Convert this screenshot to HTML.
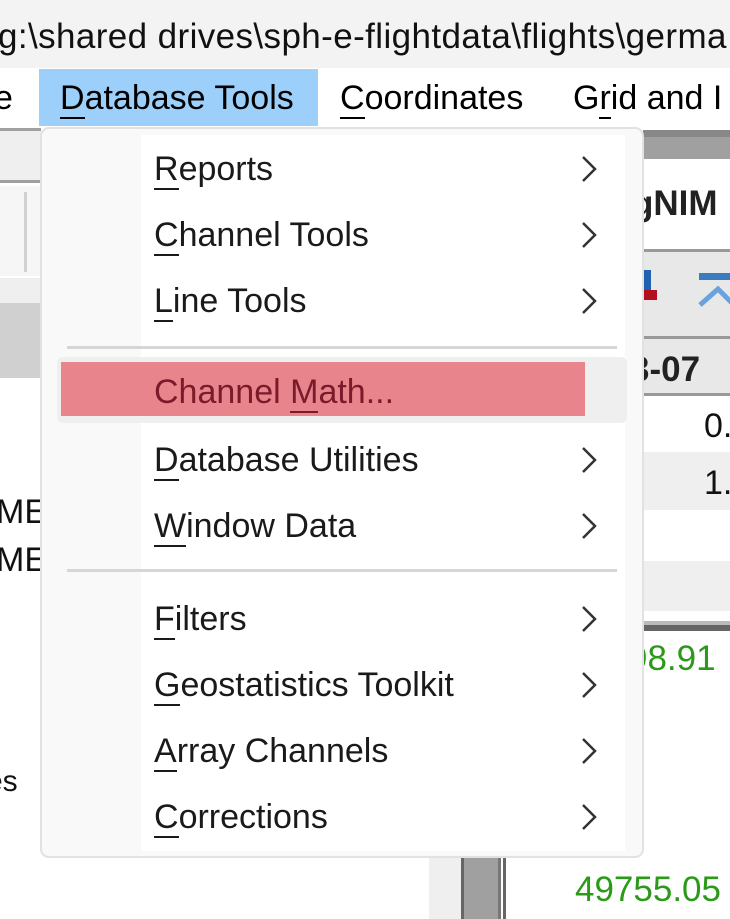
<!DOCTYPE html>
<html><head><meta charset="utf-8"><style>
*{margin:0;padding:0;box-sizing:border-box}
body{width:730px;height:919px;overflow:hidden;background:#fff;position:relative;font-family:"Liberation Sans",sans-serif;color:#000}
.a{position:absolute}
.t{position:absolute;white-space:nowrap;font-size:34px}
u{text-decoration:none;border-bottom:2px solid currentColor;line-height:1;}
.item{position:absolute;left:154px;font-size:34px;white-space:nowrap;color:#1a1a1a}
.sep{position:absolute;left:67px;width:550px;height:3px;background:#d6d6d6}
</style></head><body>
<div class="a" style="left:0;top:0;width:730px;height:68px;background:#f3f3f3"></div>
<div class="t" style="left:-2px;top:17px;font-size:35px;letter-spacing:0.4px;color:#111">g:\shared drives\sph-e-flightdata\flights\germa</div>
<div class="a" style="left:0;top:68px;width:730px;height:58px;background:#fff"></div>
<div class="a" style="left:39px;top:69px;width:279px;height:57px;background:#9ccffa"></div>
<div class="t" style="left:-6px;top:79px">e</div>
<div class="t" style="left:60px;top:79px"><u>D</u>atabase Tools</div>
<div class="t" style="left:340px;top:79px"><u>C</u>oordinates</div>
<div class="t" style="left:573px;top:79px">G<u>r</u>id and I</div>

<!-- left background -->
<div class="a" style="left:0;top:128px;width:41px;height:3px;background:#a0a0a0"></div>
<div class="a" style="left:0;top:131px;width:41px;height:50px;background:#efefef"></div>
<div class="a" style="left:0;top:180px;width:41px;height:3px;background:#a0a0a0"></div>
<div class="a" style="left:0;top:186px;width:41px;height:90px;background:#f6f6f6"></div>
<div class="a" style="left:24px;top:192px;width:3px;height:80px;background:#d0d0d0"></div>
<div class="a" style="left:0;top:278px;width:41px;height:26px;background:#efefef"></div>
<div class="a" style="left:0;top:303px;width:41px;height:75px;background:#d0d0d0"></div>
<div class="t" style="left:-4px;top:493px;color:#111">ME</div>
<div class="t" style="left:-4px;top:541px;color:#111">ME</div>
<div class="t" style="left:-14px;top:765px;font-size:30px;color:#111">es</div>

<!-- right background -->
<div class="a" style="left:643px;top:130px;width:87px;height:8px;background:#888"></div>
<div class="a" style="left:643px;top:137px;width:87px;height:22px;background:#a0a0a0"></div>
<div class="t" style="left:632px;top:184px;font-weight:bold;font-size:35px;color:#222">gNIM</div>
<div class="a" style="left:643px;top:249px;width:87px;height:3px;background:#999"></div>
<div class="a" style="left:643px;top:252px;width:87px;height:84px;background:#e8e8e8"></div>
<div class="a" style="left:643px;top:270px;width:8px;height:26px;background:#1f63b0"></div>
<div class="a" style="left:643px;top:290px;width:14px;height:10px;background:#b01020"></div>
<div class="a" style="left:699px;top:273px;width:31px;height:7px;background:#3b7bc0"></div>
<svg class="a" style="left:698px;top:286px" width="32" height="22"><path d="M2 19 L20 3 L34 17" stroke="#6aa2dc" stroke-width="5" fill="none"/></svg>
<div class="a" style="left:643px;top:336px;width:87px;height:3px;background:#999"></div>
<div class="a" style="left:643px;top:339px;width:87px;height:54px;background:#e8e8e8"></div>
<div class="t" style="left:630px;top:350px;font-weight:bold;font-size:35px;color:#222">3-07</div>
<div class="a" style="left:643px;top:393px;width:87px;height:3px;background:#999"></div>
<div class="t" style="left:704px;top:407px;font-size:34px;color:#111">0.</div>
<div class="a" style="left:643px;top:452px;width:87px;height:58px;background:#efefef"></div>
<div class="t" style="left:704px;top:464px;font-size:34px;color:#111">1.</div>
<div class="a" style="left:643px;top:561px;width:87px;height:50px;background:#efefef"></div>
<div class="a" style="left:643px;top:621px;width:87px;height:4px;background:#bbb"></div>
<div class="a" style="left:643px;top:625px;width:87px;height:6px;background:#666"></div>
<div class="t" style="left:628px;top:639px;font-size:35px;color:#2a9a18">98.91</div>
<div class="a" style="left:429px;top:857px;width:32px;height:62px;background:#efefef"></div>
<div class="a" style="left:461px;top:857px;width:40px;height:62px;background:#a0a0a0;border-left:3px solid #666;border-right:3px solid #777"></div>
<div class="a" style="left:503px;top:857px;width:3px;height:62px;background:#666"></div>
<div class="t" style="left:575px;top:870px;font-size:35px;color:#2a9a18">49755.05</div>

<!-- popup menu -->
<div class="a" style="left:40px;top:127px;width:604px;height:731px;background:#f9f9f9;border:2px solid #e2e2e2;border-radius:9px"></div>
<div class="a" style="left:141px;top:135px;width:484px;height:716px;background:#fff"></div>

<div class="item" style="top:150px"><u>R</u>eports</div>
<div class="item" style="top:216px"><u>C</u>hannel Tools</div>
<div class="item" style="top:282px"><u>L</u>ine Tools</div>
<div class="sep" style="top:346px"></div>
<div class="a" style="left:57px;top:357px;width:570px;height:66px;background:#efefef;border-radius:6px"></div>
<div class="a" style="left:61px;top:362px;width:524px;height:54px;background:#e8848c"></div>
<div class="item" style="top:373px;color:#7a1a2a">Channel <u>M</u>ath...</div>
<div class="item" style="top:441px"><u>D</u>atabase Utilities</div>
<div class="item" style="top:507px"><u>W</u>indow Data</div>
<div class="sep" style="top:569px"></div>
<div class="item" style="top:600px"><u>F</u>ilters</div>
<div class="item" style="top:666px"><u>G</u>eostatistics Toolkit</div>
<div class="item" style="top:732px"><u>A</u>rray Channels</div>
<div class="item" style="top:798px"><u>C</u>orrections</div>

<svg class="a" style="left:0;top:0" width="730" height="919">
<g stroke="#333" stroke-width="2.5" fill="none">
<path d="M583 157 L595 169 L583 181"/>
<path d="M583 223 L595 235 L583 247"/>
<path d="M583 289 L595 301 L583 313"/>
<path d="M583 448 L595 460 L583 472"/>
<path d="M583 514 L595 526 L583 538"/>
<path d="M583 607 L595 619 L583 631"/>
<path d="M583 673 L595 685 L583 697"/>
<path d="M583 739 L595 751 L583 763"/>
<path d="M583 805 L595 817 L583 829"/>
</g></svg>
</body></html>
